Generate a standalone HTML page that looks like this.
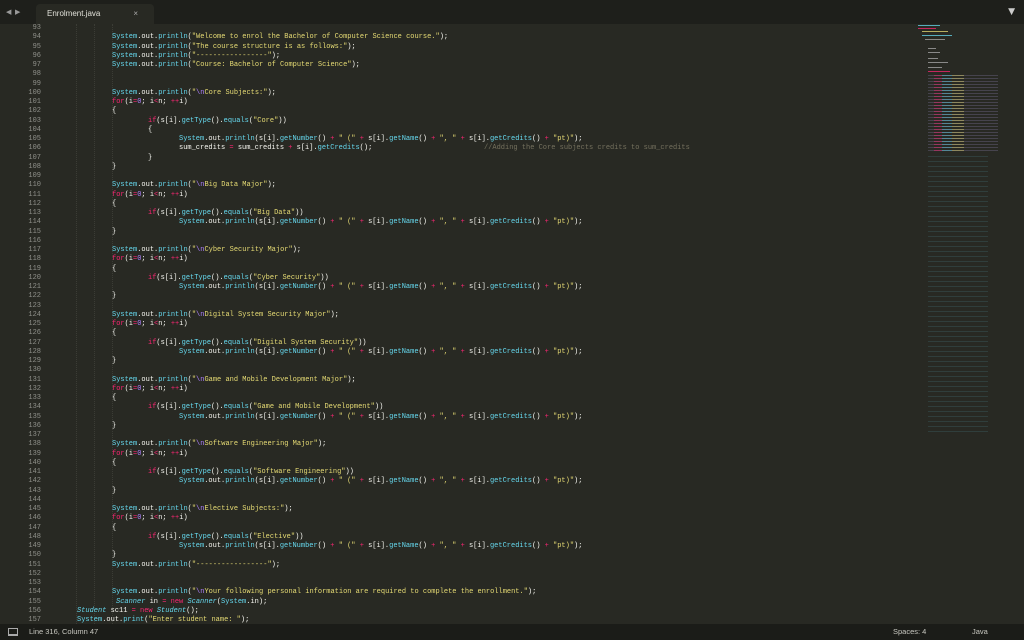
<!DOCTYPE html>
<html><head><meta charset="utf-8"><style>
*{margin:0;padding:0;box-sizing:border-box}
body{width:1024px;height:640px;background:#282923;overflow:hidden;position:relative;font-family:"Liberation Mono",monospace;font-size:7px;color:#f8f8f2}
#tabs{position:absolute;left:0;top:0;width:1024px;height:24px;background:#1e1f1b}
#tab{position:absolute;left:36px;top:4px;width:118px;height:20px;background:#282923;border-radius:4px 4px 0 0;font-family:"Liberation Sans",sans-serif;font-size:8px;color:#e0e0d8;padding:5px 0 0 11px}
#tab b{position:absolute;right:16px;top:5px;font-weight:normal;color:#aaa}
.arr{position:absolute;top:8px;font-size:7px;color:#999;font-family:"DejaVu Sans",sans-serif}
.ln{position:absolute;left:0;width:50px;text-align:right;padding-right:9px;color:#8f908a;height:9.25px;line-height:9.25px}
.l{position:absolute;white-space:pre;height:9.25px;line-height:9.25px}
.k{color:#f92672}.f{color:#66d9ef}.s{color:#e6db74}.n{color:#ae81ff}.c{color:#75715e}.t{color:#66d9ef;font-style:italic}
.g{position:absolute;top:24px;height:600px;border-left:1px dotted #3b3c35}
#status{position:absolute;left:0;top:624px;width:1024px;height:16px;background:#1b1c18;font-family:"Liberation Sans",sans-serif;font-size:7.5px;color:#c8c8c0}
#mm div{position:absolute;height:1px}
</style></head><body>
<div id="tabs"><span class="arr" style="left:6px">◀</span><span class="arr" style="left:15px">▶</span>
<div id="tab">Enrolment.java<b>×</b></div>
<span style="position:absolute;right:9px;top:7px;color:#ccc;font-size:9px;font-family:'DejaVu Sans',sans-serif">▼</span></div>
<div class="g" style="left:76px"></div><div class="g" style="left:94px"></div><div class="g" style="left:112px"></div>

<div style="position:absolute;left:0;top:24px;width:1px;height:1px">
<div class="ln" style="top:0">93</div><div class="ln" style="top:9.25px">94</div><div class="ln" style="top:18.5px">95</div><div class="ln" style="top:27.75px">96</div><div class="ln" style="top:37px">97</div><div class="ln" style="top:46.25px">98</div><div class="ln" style="top:55.5px">99</div><div class="ln" style="top:64.75px">100</div><div class="ln" style="top:74px">101</div><div class="ln" style="top:83.25px">102</div><div class="ln" style="top:92.5px">103</div><div class="ln" style="top:101.75px">104</div><div class="ln" style="top:111px">105</div><div class="ln" style="top:120.25px">106</div><div class="ln" style="top:129.5px">107</div><div class="ln" style="top:138.75px">108</div><div class="ln" style="top:148px">109</div><div class="ln" style="top:157.25px">110</div><div class="ln" style="top:166.5px">111</div><div class="ln" style="top:175.75px">112</div><div class="ln" style="top:185px">113</div><div class="ln" style="top:194.25px">114</div><div class="ln" style="top:203.5px">115</div><div class="ln" style="top:212.75px">116</div><div class="ln" style="top:222px">117</div><div class="ln" style="top:231.25px">118</div><div class="ln" style="top:240.5px">119</div><div class="ln" style="top:249.75px">120</div><div class="ln" style="top:259px">121</div><div class="ln" style="top:268.25px">122</div><div class="ln" style="top:277.5px">123</div><div class="ln" style="top:286.75px">124</div><div class="ln" style="top:296px">125</div><div class="ln" style="top:305.25px">126</div><div class="ln" style="top:314.5px">127</div><div class="ln" style="top:323.75px">128</div><div class="ln" style="top:333px">129</div><div class="ln" style="top:342.25px">130</div><div class="ln" style="top:351.5px">131</div><div class="ln" style="top:360.75px">132</div><div class="ln" style="top:370px">133</div><div class="ln" style="top:379.25px">134</div><div class="ln" style="top:388.5px">135</div><div class="ln" style="top:397.75px">136</div><div class="ln" style="top:407px">137</div><div class="ln" style="top:416.25px">138</div><div class="ln" style="top:425.5px">139</div><div class="ln" style="top:434.75px">140</div><div class="ln" style="top:444px">141</div><div class="ln" style="top:453.25px">142</div><div class="ln" style="top:462.5px">143</div><div class="ln" style="top:471.75px">144</div><div class="ln" style="top:481px">145</div><div class="ln" style="top:490.25px">146</div><div class="ln" style="top:499.5px">147</div><div class="ln" style="top:508.75px">148</div><div class="ln" style="top:518px">149</div><div class="ln" style="top:527.25px">150</div><div class="ln" style="top:536.5px">151</div><div class="ln" style="top:545.75px">152</div><div class="ln" style="top:555px">153</div><div class="ln" style="top:564.25px">154</div><div class="ln" style="top:573.5px">155</div><div class="ln" style="top:582.75px">156</div><div class="ln" style="top:592px">157</div>

<div class="l" style="top:9.25px;left:112px"><span class="f">System</span>.out.<span class="f">println</span>(<span class="s">"Welcome to enrol the Bachelor of Computer Science course."</span>);</div>
<div class="l" style="top:18.5px;left:112px"><span class="f">System</span>.out.<span class="f">println</span>(<span class="s">"The course structure is as follows:"</span>);</div>
<div class="l" style="top:27.75px;left:112px"><span class="f">System</span>.out.<span class="f">println</span>(<span class="s">"-----------------"</span>);</div>
<div class="l" style="top:37px;left:112px"><span class="f">System</span>.out.<span class="f">println</span>(<span class="s">"Course: Bachelor of Computer Science"</span>);</div>

<div class="l" style="top:64.75px;left:112px"><span class="f">System</span>.out.<span class="f">println</span>(<span class="s">"<span class="n">\n</span>Core Subjects:"</span>);</div>
<div class="l" style="top:74px;left:112px"><span class="k">for</span>(i<span class="k">=</span><span class="n">0</span>; i<span class="k">&lt;</span>n; <span class="k">++</span>i)</div>
<div class="l" style="top:83.25px;left:112px">{</div>
<div class="l" style="top:92.5px;left:148px"><span class="k">if</span>(s[i].<span class="f">getType</span>().<span class="f">equals</span>(<span class="s">"Core"</span>))</div>
<div class="l" style="top:101.75px;left:148px">{</div>
<div class="l" style="top:111px;left:179px"><span class="f">System</span>.out.<span class="f">println</span>(s[i].<span class="f">getNumber</span>() <span class="k">+</span> <span class="s">" ("</span> <span class="k">+</span> s[i].<span class="f">getName</span>() <span class="k">+</span> <span class="s">", "</span> <span class="k">+</span> s[i].<span class="f">getCredits</span>() <span class="k">+</span> <span class="s">"pt)"</span>);</div>
<div class="l" style="top:120.25px;left:179px">sum_credits <span class="k">=</span> sum_credits <span class="k">+</span> s[i].<span class="f">getCredits</span>();</div>
<div class="l" style="top:120.25px;left:484px"><span class="c">//Adding the Core subjects credits to sum_credits</span></div>
<div class="l" style="top:129.5px;left:148px">}</div>
<div class="l" style="top:138.75px;left:112px">}</div>

<div class="l" style="top:157.25px;left:112px"><span class="f">System</span>.out.<span class="f">println</span>(<span class="s">"<span class="n">\n</span>Big Data Major"</span>);</div>
<div class="l" style="top:166.5px;left:112px"><span class="k">for</span>(i<span class="k">=</span><span class="n">0</span>; i<span class="k">&lt;</span>n; <span class="k">++</span>i)</div>
<div class="l" style="top:175.75px;left:112px">{</div>
<div class="l" style="top:185px;left:148px"><span class="k">if</span>(s[i].<span class="f">getType</span>().<span class="f">equals</span>(<span class="s">"Big Data"</span>))</div>
<div class="l" style="top:194.25px;left:179px"><span class="f">System</span>.out.<span class="f">println</span>(s[i].<span class="f">getNumber</span>() <span class="k">+</span> <span class="s">" ("</span> <span class="k">+</span> s[i].<span class="f">getName</span>() <span class="k">+</span> <span class="s">", "</span> <span class="k">+</span> s[i].<span class="f">getCredits</span>() <span class="k">+</span> <span class="s">"pt)"</span>);</div>
<div class="l" style="top:203.5px;left:112px">}</div>

<div class="l" style="top:222px;left:112px"><span class="f">System</span>.out.<span class="f">println</span>(<span class="s">"<span class="n">\n</span>Cyber Security Major"</span>);</div>
<div class="l" style="top:231.25px;left:112px"><span class="k">for</span>(i<span class="k">=</span><span class="n">0</span>; i<span class="k">&lt;</span>n; <span class="k">++</span>i)</div>
<div class="l" style="top:240.5px;left:112px">{</div>
<div class="l" style="top:249.75px;left:148px"><span class="k">if</span>(s[i].<span class="f">getType</span>().<span class="f">equals</span>(<span class="s">"Cyber Security"</span>))</div>
<div class="l" style="top:259px;left:179px"><span class="f">System</span>.out.<span class="f">println</span>(s[i].<span class="f">getNumber</span>() <span class="k">+</span> <span class="s">" ("</span> <span class="k">+</span> s[i].<span class="f">getName</span>() <span class="k">+</span> <span class="s">", "</span> <span class="k">+</span> s[i].<span class="f">getCredits</span>() <span class="k">+</span> <span class="s">"pt)"</span>);</div>
<div class="l" style="top:268.25px;left:112px">}</div>

<div class="l" style="top:286.75px;left:112px"><span class="f">System</span>.out.<span class="f">println</span>(<span class="s">"<span class="n">\n</span>Digital System Security Major"</span>);</div>
<div class="l" style="top:296px;left:112px"><span class="k">for</span>(i<span class="k">=</span><span class="n">0</span>; i<span class="k">&lt;</span>n; <span class="k">++</span>i)</div>
<div class="l" style="top:305.25px;left:112px">{</div>
<div class="l" style="top:314.5px;left:148px"><span class="k">if</span>(s[i].<span class="f">getType</span>().<span class="f">equals</span>(<span class="s">"Digital System Security"</span>))</div>
<div class="l" style="top:323.75px;left:179px"><span class="f">System</span>.out.<span class="f">println</span>(s[i].<span class="f">getNumber</span>() <span class="k">+</span> <span class="s">" ("</span> <span class="k">+</span> s[i].<span class="f">getName</span>() <span class="k">+</span> <span class="s">", "</span> <span class="k">+</span> s[i].<span class="f">getCredits</span>() <span class="k">+</span> <span class="s">"pt)"</span>);</div>
<div class="l" style="top:333px;left:112px">}</div>

<div class="l" style="top:351.5px;left:112px"><span class="f">System</span>.out.<span class="f">println</span>(<span class="s">"<span class="n">\n</span>Game and Mobile Development Major"</span>);</div>
<div class="l" style="top:360.75px;left:112px"><span class="k">for</span>(i<span class="k">=</span><span class="n">0</span>; i<span class="k">&lt;</span>n; <span class="k">++</span>i)</div>
<div class="l" style="top:370px;left:112px">{</div>
<div class="l" style="top:379.25px;left:148px"><span class="k">if</span>(s[i].<span class="f">getType</span>().<span class="f">equals</span>(<span class="s">"Game and Mobile Development"</span>))</div>
<div class="l" style="top:388.5px;left:179px"><span class="f">System</span>.out.<span class="f">println</span>(s[i].<span class="f">getNumber</span>() <span class="k">+</span> <span class="s">" ("</span> <span class="k">+</span> s[i].<span class="f">getName</span>() <span class="k">+</span> <span class="s">", "</span> <span class="k">+</span> s[i].<span class="f">getCredits</span>() <span class="k">+</span> <span class="s">"pt)"</span>);</div>
<div class="l" style="top:397.75px;left:112px">}</div>

<div class="l" style="top:416.25px;left:112px"><span class="f">System</span>.out.<span class="f">println</span>(<span class="s">"<span class="n">\n</span>Software Engineering Major"</span>);</div>
<div class="l" style="top:425.5px;left:112px"><span class="k">for</span>(i<span class="k">=</span><span class="n">0</span>; i<span class="k">&lt;</span>n; <span class="k">++</span>i)</div>
<div class="l" style="top:434.75px;left:112px">{</div>
<div class="l" style="top:444px;left:148px"><span class="k">if</span>(s[i].<span class="f">getType</span>().<span class="f">equals</span>(<span class="s">"Software Engineering"</span>))</div>
<div class="l" style="top:453.25px;left:179px"><span class="f">System</span>.out.<span class="f">println</span>(s[i].<span class="f">getNumber</span>() <span class="k">+</span> <span class="s">" ("</span> <span class="k">+</span> s[i].<span class="f">getName</span>() <span class="k">+</span> <span class="s">", "</span> <span class="k">+</span> s[i].<span class="f">getCredits</span>() <span class="k">+</span> <span class="s">"pt)"</span>);</div>
<div class="l" style="top:462.5px;left:112px">}</div>

<div class="l" style="top:481px;left:112px"><span class="f">System</span>.out.<span class="f">println</span>(<span class="s">"<span class="n">\n</span>Elective Subjects:"</span>);</div>
<div class="l" style="top:490.25px;left:112px"><span class="k">for</span>(i<span class="k">=</span><span class="n">0</span>; i<span class="k">&lt;</span>n; <span class="k">++</span>i)</div>
<div class="l" style="top:499.5px;left:112px">{</div>
<div class="l" style="top:508.75px;left:148px"><span class="k">if</span>(s[i].<span class="f">getType</span>().<span class="f">equals</span>(<span class="s">"Elective"</span>))</div>
<div class="l" style="top:518px;left:179px"><span class="f">System</span>.out.<span class="f">println</span>(s[i].<span class="f">getNumber</span>() <span class="k">+</span> <span class="s">" ("</span> <span class="k">+</span> s[i].<span class="f">getName</span>() <span class="k">+</span> <span class="s">", "</span> <span class="k">+</span> s[i].<span class="f">getCredits</span>() <span class="k">+</span> <span class="s">"pt)"</span>);</div>
<div class="l" style="top:527.25px;left:112px">}</div>
<div class="l" style="top:536.5px;left:112px"><span class="f">System</span>.out.<span class="f">println</span>(<span class="s">"-----------------"</span>);</div>

<div class="l" style="top:564.25px;left:112px"><span class="f">System</span>.out.<span class="f">println</span>(<span class="s">"<span class="n">\n</span>Your following personal information are required to complete the enrollment."</span>);</div>
<div class="l" style="top:573.5px;left:116px"><span class="t">Scanner</span> in <span class="k">=</span> <span class="k">new</span> <span class="t">Scanner</span>(<span class="f">System</span>.in);</div>
<div class="l" style="top:582.75px;left:77px"><span class="t">Student</span> sc11 <span class="k">=</span> <span class="k">new</span> <span class="t">Student</span>();</div>
<div class="l" style="top:592px;left:77px"><span class="f">System</span>.out.<span class="f">print</span>(<span class="s">"Enter student name: "</span>);</div>
</div>

<div id="mm" style="position:absolute;left:0;top:0;opacity:.75">
<div style="left:918px;top:25px;width:22px;background:#66d9ef"></div><div style="left:918px;top:28px;width:18px;background:#f92672"></div><div style="left:922px;top:31px;width:26px;background:#e6db74"></div><div style="left:922px;top:35px;width:30px;background:#66d9ef"></div><div style="left:925px;top:39px;width:20px;background:#aaa"></div>
<div style="left:928px;top:48px;width:8px;background:#aaa"></div><div style="left:928px;top:52px;width:12px;background:#aaa"></div><div style="left:928px;top:58px;width:10px;background:#aaa"></div><div style="left:928px;top:62px;width:20px;background:#aaa"></div><div style="left:928px;top:67px;width:14px;background:#aaa"></div><div style="left:928px;top:71px;width:22px;background:#f92672"></div>
</div>
<div style="position:absolute;left:928px;top:75px;width:70px;height:78px;background:repeating-linear-gradient(180deg,#8a7fb0 0 1px,transparent 1px 3px);opacity:.3"></div>
<div style="position:absolute;left:934px;top:75px;width:8px;height:78px;background:repeating-linear-gradient(180deg,#f92672 0 1px,transparent 1px 3px);opacity:.45"></div>
<div style="position:absolute;left:942px;top:75px;width:10px;height:78px;background:repeating-linear-gradient(180deg,#66d9ef 0 1px,transparent 1px 3px);opacity:.45"></div>
<div style="position:absolute;left:952px;top:75px;width:12px;height:78px;background:repeating-linear-gradient(180deg,#e6db74 0 1px,transparent 1px 3px);opacity:.45"></div>
<div style="position:absolute;left:928px;top:156px;width:60px;height:280px;background:repeating-linear-gradient(180deg,#66d9ef 0 1px,transparent 1px 5px);opacity:.12"></div>

<div id="status"><span style="position:absolute;left:8px;top:4px;width:10px;height:8px;border:1px solid #aaa;border-bottom-width:2px"></span><span style="position:absolute;left:29px;top:3px">Line 316, Column 47</span><span style="position:absolute;left:893px;top:3px">Spaces: 4</span><span style="position:absolute;left:972px;top:3px">Java</span></div>
</body></html>
